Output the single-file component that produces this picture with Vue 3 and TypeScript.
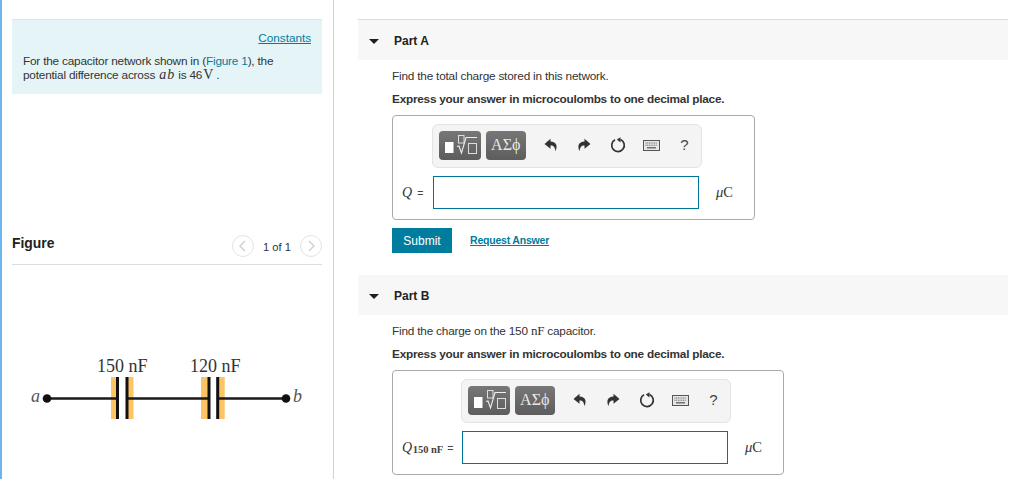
<script setup lang="ts">
interface Part {
  name: string
  prompt: string
  promptMath?: string
  promptEnd?: string
  sub: boolean
  actions: boolean
}
const parts: Part[] = [
  { name: 'Part A', prompt: 'Find the total charge stored in this network.', sub: false, actions: true },
  { name: 'Part B', prompt: 'Find the charge on the 150 ', promptMath: 'nF', promptEnd: ' capacitor.', sub: true, actions: false },
]
</script>

<template>
  <div class="page">
    <aside class="left">
      <section class="intro">
        <a class="constants">Constants</a>
        <p class="intro-text">For the capacitor network shown in (<span class="link">Figure 1</span>), the<br />potential difference across <i class="math inline-var">ab</i> is 46 <span class="math inline-unit">V</span> .</p>
      </section>
      <header class="figure-head">
        <h2>Figure</h2>
        <div class="pager">
          <span class="round"><svg width="22" height="22" viewBox="0 0 22 22"><path d="M13 6 8 11l5 5" fill="none" stroke="#c9d0d4" stroke-width="1.4" /></svg></span>
          <span class="count">1 of 1</span>
          <span class="round"><svg width="22" height="22" viewBox="0 0 22 22"><path d="M9 6l5 5-5 5" fill="none" stroke="#c9d0d4" stroke-width="1.4" /></svg></span>
        </div>
      </header>
      <svg class="circuit" width="310" height="80" viewBox="0 0 310 80">
        <rect x="99" y="12" width="7" height="42" fill="#fdc466" />
        <rect x="115" y="12" width="6.500" height="42" fill="#fdc466" />
        <rect x="189" y="12" width="8" height="42" fill="#fdc466" />
        <rect x="206" y="12" width="6.700" height="42" fill="#fdc466" />
        <path d="M35 33.500H105.500M115 33.500H197M205.700 33.500H274" stroke="#1a1a1a" stroke-width="2.400" fill="none" />
        <path d="M105.500 12V54M115 12V54M197 12V54M205.700 12V54" stroke="#111" stroke-width="3" fill="none" />
        <circle cx="35" cy="33.500" r="4.300" fill="#111" />
        <circle cx="274" cy="33.500" r="4.300" fill="#111" />
        <text x="85" y="7" class="fig-text">150 nF</text>
        <text x="178" y="7" class="fig-text">120 nF</text>
        <text x="19" y="37" class="fig-text fig-var">a</text>
        <text x="281" y="37" class="fig-text fig-var">b</text>
      </svg>
    </aside>

    <main class="right">
      <section v-for="part in parts" :key="part.name" class="part">
        <header class="part-head">
          <svg class="caret" width="10" height="5" viewBox="0 0 10 5"><path d="M0 0h10L5 5z" fill="#1f1f1f" /></svg>
          <h3>{{ part.name }}</h3>
        </header>
        <div class="part-body">
          <p class="prompt">{{ part.prompt }}<span v-if="part.promptMath" class="math prompt-math">{{ part.promptMath }}</span>{{ part.promptEnd }}</p>
          <p class="instruction">Express your answer in microcoulombs to one decimal place.</p>
          <div class="answer-box" :class="{ wide: part.sub }">
            <div class="toolbar">
              <button class="tool">
                <svg width="42" height="29" viewBox="0 0 42 29">
                  <rect x="6" y="11" width="8.500" height="11" fill="#fff" />
                  <rect x="19.500" y="4.500" width="5.500" height="7.500" fill="none" stroke="#ddd" />
                  <path d="M18 15.500l2-.5 2.500 7L27 6.500h11" fill="none" stroke="#eee" stroke-width="1.100" />
                  <rect x="29.500" y="12.500" width="8" height="10" fill="none" stroke="#ddd" />
                </svg>
              </button>
              <button class="tool greek">ΑΣϕ</button>
              <div class="actions">
                <svg width="14" height="14" viewBox="0 0 14 14"><path d="M6.500 .8.500 6l6 4.800V7.600c2.800-.2 4.300 1.100 5 5.600 2.300-5.200 1-9.300-5-9.600z" fill="#333" /></svg>
                <svg width="14" height="14" viewBox="0 0 14 14"><path d="M7.500 .8 13.500 6l-6 4.800V7.600c-2.800-.2-4.300 1.100-5 5.600-2.300-5.200-1-9.300 5-9.600z" fill="#333" /></svg>
                <svg width="16" height="16" viewBox="0 0 16 16"><path d="M5 2.700a6.300 6.300 0 1 0 5.600-.2" fill="none" stroke="#333" stroke-width="1.700" /><path d="M10.500 .2V5.500L6.800 2.400z" fill="#333" /></svg>
                <svg class="keyboard" width="17" height="11" viewBox="0 0 17 11"><rect x=".5" y=".5" width="16" height="10" fill="#e6e6e6" stroke="#555" /><path d="M2.500 3h12M2.500 5.200h12" stroke="#666" stroke-dasharray="1 .7" /><path d="M4 7.800h9" stroke="#555" stroke-width="1.200" /></svg>
                <span class="help">?</span>
              </div>
            </div>
            <div class="answer-row">
              <span class="label">
                <i class="math q">Q</i><sub v-if="part.sub" class="math q-sub">150 nF</sub>
                <span class="eq">=</span>
              </span>
              <div class="input"></div>
              <span class="unit math"><i>μ</i>C</span>
            </div>
          </div>
          <div v-if="part.actions" class="submit-row">
            <button class="submit">Submit</button>
            <a class="request">Request Answer</a>
          </div>
        </div>
      </section>
    </main>
  </div>
</template>

<style>
html, body { margin: 0; overflow: hidden; background: #fff; }
</style>

<style scoped>
.page {
  display: flex;
  height: 479px;
  width: 1024px;
  overflow: hidden;
  font-family: "Liberation Sans", Arial, sans-serif;
  color: #333;
}
p, h2, h3 { margin: 0; }
.math { font-family: "Liberation Serif", serif; }
.link { color: #007c9e; }

.left {
  box-sizing: border-box;
  width: 334px;
  flex: none;
  padding: 19px 11px 0 10px;
  border-left: 2px solid #6cb4ee;
  border-right: 1px solid #c9d3e6;
}
.intro {
  box-sizing: border-box;
  height: 75px;
  padding: 11px 11px 0 11px;
  background: #e5f5f7;
  border-top: 1px solid #dbe6ea;
  font-size: 11.800px;
  letter-spacing: -0.2px;
  line-height: 14px;
}
.constants {
  display: block;
  text-align: right;
  color: #007c9e;
  font-size: 11.800px;
  letter-spacing: -0.05px;
  text-decoration: underline;
}
.intro-text { margin-top: 9px; }
.inline-var { font-size: 14px; letter-spacing: 1px; line-height: 0; margin-left: 1px; }
.inline-unit { font-size: 14px; line-height: 0; margin-left: -2px; }
.figure-head {
  display: flex;
  align-items: center;
  justify-content: space-between;
  box-sizing: border-box;
  height: 36px;
  margin-top: 135px;
  border-bottom: 1px solid #d9dee3;
  padding-bottom: 2px;
}
.figure-head h2 { font-size: 13.900px; color: #222; margin-top: -5px; }
.pager { display: flex; align-items: center; gap: 9px; font-size: 11.200px; }
.count { padding-top: 3px; }
.round {
  display: block;
  box-sizing: border-box;
  width: 22px;
  height: 22px;
  border: 1px solid #e0e4e7;
  border-radius: 50%;
  overflow: hidden;
}
.round svg { display: block; margin: -1px; }
.circuit { display: block; margin-top: 100px; overflow: visible; }
.fig-text { font-family: "Liberation Serif", serif; font-size: 18px; fill: #333; }
.fig-var { font-style: italic; fill: #555; }

.right {
  flex: 1;
  box-sizing: border-box;
  padding: 19px 16px 0 24px;
}
.part { margin-bottom: 22px; }
.part-head {
  display: flex;
  align-items: center;
  box-sizing: border-box;
  height: 41px;
  padding-left: 11px;
  background: #f7f7f7;
}
.part:first-child .part-head { border-top: 1px solid #dcdcdc; }
.part:not(:first-child) .part-head { height: 40px; }
.caret { flex: none; margin-top: 2px; }
.part-head h3 { margin: 2px 0 0 15px; font-size: 12px; color: #222; }
.part-body { padding: 9px 0 0 34px; font-size: 11.800px; letter-spacing: -0.2px; line-height: 14px; }
.prompt-math { font-size: 13px; line-height: 0; }
.instruction { margin-top: 9px; font-weight: 700; letter-spacing: -0.24px; }
.answer-box {
  box-sizing: border-box;
  width: 363px;
  height: 105px;
  margin-top: 9px;
  padding: 8px 0 0 9px;
  border: 1px solid #aaa;
  border-radius: 4px;
  letter-spacing: 0;
}
.answer-box.wide { width: 392px; }
.toolbar {
  display: flex;
  align-items: center;
  box-sizing: border-box;
  width: 270px;
  height: 44px;
  margin-left: 30px;
  padding: 0 0 1px 6px;
  background: #f4f4f4;
  border: 1px solid #e3e3e3;
  border-radius: 6px;
}
.wide .toolbar { margin-left: 59px; }
.tool {
  display: flex;
  align-items: center;
  justify-content: center;
  box-sizing: border-box;
  width: 42px;
  height: 29px;
  padding: 0;
  margin-right: 5px;
  border: 0;
  border-radius: 4px;
  background: linear-gradient(#777, #5d5d5d);
}
.tool svg { display: block; }
.greek { font-family: "Liberation Serif", serif; font-size: 16px; color: #e8e8e8; padding-bottom: 2px; }
.actions {
  display: grid;
  grid-template-columns: repeat(5, 33.300px);
  justify-items: center;
  align-items: center;
  margin: -2px 0 0 4px;
}
.keyboard { margin-top: 2px; }
.help { font-size: 15px; color: #444; }
.answer-row { display: flex; align-items: center; margin-top: 8px; }
.label {
  display: flex;
  align-items: center;
  flex: none;
  width: 31px;
  white-space: nowrap;
  font-size: 10.500px;
}
.wide .label { width: 60px; }
.q { font-size: 14px; margin-right: 5px; }
.q-sub { font-size: 10.500px; margin: 5px 4px 0 -4.500px; font-weight: 700; color: #444; }
.eq { color: #444; }
.input {
  box-sizing: border-box;
  flex: none;
  width: 266px;
  height: 33px;
  border: 1px solid #00759a;
  background: #fff;
}
.unit { margin-left: 17px; font-size: 14.500px; margin-top: -2px; }
.submit-row { display: flex; align-items: center; margin-top: 8px; }
.submit {
  box-sizing: border-box;
  width: 60px;
  height: 25px;
  padding: 0;
  border: 0;
  background: #007c9e;
  color: #fff;
  font: 12px "Liberation Sans", Arial, sans-serif;
}
.request {
  margin-left: 18px;
  margin-top: -1px;
  font-size: 10.500px;
  font-weight: 700;
  color: #007c9e;
  text-decoration: underline;
}
</style>
